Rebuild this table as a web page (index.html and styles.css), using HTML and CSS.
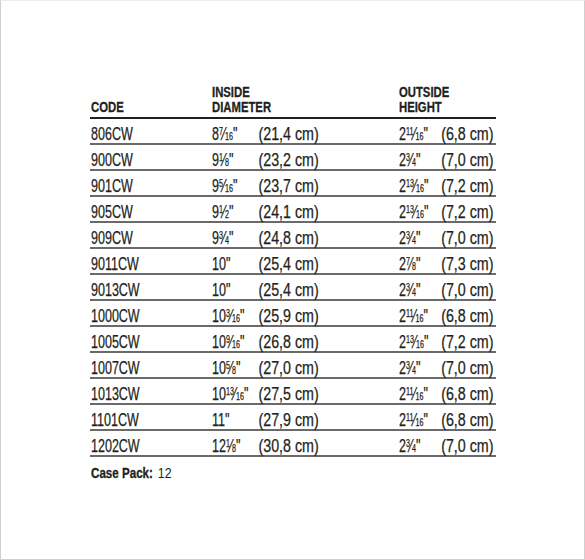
FILE: index.html
```html
<!DOCTYPE html>
<html>
<head>
<meta charset="utf-8">
<link rel="stylesheet" href="styles.css">
</head>
<body>
<div class="page">
  <div class="table">
    <div class="head">
      <div><span class="t">CODE</span></div>
      <div><span class="t">INSIDE<br>DIAMETER</span></div>
      <div><span class="t">OUTSIDE<br>HEIGHT</span></div>
    </div>
    <div class="row"><div><span class="t">806CW</span></div><div><span class="t"><span class="in">8<span class="fr"><span class="n">7</span>⁄<span class="d">16</span></span>"</span><span class="cm">(21,4 cm)</span></span></div><div><span class="t"><span class="out">2<span class="fr"><span class="n">11</span>⁄<span class="d">16</span></span>"</span><span class="cm">(6,8 cm)</span></span></div></div>
    <div class="row"><div><span class="t">900CW</span></div><div><span class="t"><span class="in">9<span class="fr"><span class="n">1</span>⁄<span class="d">8</span></span>"</span><span class="cm">(23,2 cm)</span></span></div><div><span class="t"><span class="out">2<span class="fr"><span class="n">3</span>⁄<span class="d">4</span></span>"</span><span class="cm">(7,0 cm)</span></span></div></div>
    <div class="row"><div><span class="t">901CW</span></div><div><span class="t"><span class="in">9<span class="fr"><span class="n">5</span>⁄<span class="d">16</span></span>"</span><span class="cm">(23,7 cm)</span></span></div><div><span class="t"><span class="out">2<span class="fr"><span class="n">13</span>⁄<span class="d">16</span></span>"</span><span class="cm">(7,2 cm)</span></span></div></div>
    <div class="row"><div><span class="t">905CW</span></div><div><span class="t"><span class="in">9<span class="fr"><span class="n">1</span>⁄<span class="d">2</span></span>"</span><span class="cm">(24,1 cm)</span></span></div><div><span class="t"><span class="out">2<span class="fr"><span class="n">13</span>⁄<span class="d">16</span></span>"</span><span class="cm">(7,2 cm)</span></span></div></div>
    <div class="row"><div><span class="t">909CW</span></div><div><span class="t"><span class="in">9<span class="fr"><span class="n">3</span>⁄<span class="d">4</span></span>"</span><span class="cm">(24,8 cm)</span></span></div><div><span class="t"><span class="out">2<span class="fr"><span class="n">3</span>⁄<span class="d">4</span></span>"</span><span class="cm">(7,0 cm)</span></span></div></div>
    <div class="row"><div><span class="t">9011CW</span></div><div><span class="t"><span class="in">10"</span><span class="cm">(25,4 cm)</span></span></div><div><span class="t"><span class="out">2<span class="fr"><span class="n">7</span>⁄<span class="d">8</span></span>"</span><span class="cm">(7,3 cm)</span></span></div></div>
    <div class="row"><div><span class="t">9013CW</span></div><div><span class="t"><span class="in">10"</span><span class="cm">(25,4 cm)</span></span></div><div><span class="t"><span class="out">2<span class="fr"><span class="n">3</span>⁄<span class="d">4</span></span>"</span><span class="cm">(7,0 cm)</span></span></div></div>
    <div class="row"><div><span class="t">1000CW</span></div><div><span class="t"><span class="in">10<span class="fr"><span class="n">3</span>⁄<span class="d">16</span></span>"</span><span class="cm">(25,9 cm)</span></span></div><div><span class="t"><span class="out">2<span class="fr"><span class="n">11</span>⁄<span class="d">16</span></span>"</span><span class="cm">(6,8 cm)</span></span></div></div>
    <div class="row"><div><span class="t">1005CW</span></div><div><span class="t"><span class="in">10<span class="fr"><span class="n">9</span>⁄<span class="d">16</span></span>"</span><span class="cm">(26,8 cm)</span></span></div><div><span class="t"><span class="out">2<span class="fr"><span class="n">13</span>⁄<span class="d">16</span></span>"</span><span class="cm">(7,2 cm)</span></span></div></div>
    <div class="row"><div><span class="t">1007CW</span></div><div><span class="t"><span class="in">10<span class="fr"><span class="n">5</span>⁄<span class="d">8</span></span>"</span><span class="cm">(27,0 cm)</span></span></div><div><span class="t"><span class="out">2<span class="fr"><span class="n">3</span>⁄<span class="d">4</span></span>"</span><span class="cm">(7,0 cm)</span></span></div></div>
    <div class="row"><div><span class="t">1013CW</span></div><div><span class="t"><span class="in">10<span class="fr"><span class="n">13</span>⁄<span class="d">16</span></span>"</span><span class="cm">(27,5 cm)</span></span></div><div><span class="t"><span class="out">2<span class="fr"><span class="n">11</span>⁄<span class="d">16</span></span>"</span><span class="cm">(6,8 cm)</span></span></div></div>
    <div class="row"><div><span class="t">1101CW</span></div><div><span class="t"><span class="in">11"</span><span class="cm">(27,9 cm)</span></span></div><div><span class="t"><span class="out">2<span class="fr"><span class="n">11</span>⁄<span class="d">16</span></span>"</span><span class="cm">(6,8 cm)</span></span></div></div>
    <div class="row"><div><span class="t">1202CW</span></div><div><span class="t"><span class="in">12<span class="fr"><span class="n">1</span>⁄<span class="d">8</span></span>"</span><span class="cm">(30,8 cm)</span></span></div><div><span class="t"><span class="out">2<span class="fr"><span class="n">3</span>⁄<span class="d">4</span></span>"</span><span class="cm">(7,0 cm)</span></span></div></div>
    <div class="note"><span class="t"><b>Case Pack:</b> <span class="qty">12</span></span></div>
  </div>
</div>
</body>
</html>
```
FILE: styles.css
```css
html, body {
  margin: 0;
  padding: 0;
  background: #fff;
}
.page {
  width: 585px;
  height: 560px;
  box-sizing: border-box;
  border: 1px solid #cfcfcf;
  border-top-color: #ececec;
  padding: 84px 0 0 89px;
  color: #231f20;
  font-family: "Liberation Sans", Arial, sans-serif;
}
.table {
  width: 406px;
}
.head, .row {
  display: grid;
  grid-template-columns: 121px 187px 1fr;
  align-items: end;
}
.t {
  display: inline-block;
  transform-origin: 0 100%;
  white-space: nowrap;
}
.head {
  font-weight: bold;
  font-size: 14.5px;
  line-height: 15px;
  padding-bottom: 2px;
  border-bottom: 2px solid #231f20;
}
.head .t {
  transform: scaleX(0.78);
  -webkit-text-stroke: 0.3px #231f20;
}
.head > div {
  padding-left: 1px;
}
.row {
  height: 26px;
  box-sizing: border-box;
  border-bottom: 2px solid #6a6a6a;
  font-size: 17.5px;
  line-height: 18px;
  padding-bottom: 0;
  white-space: nowrap;
}
.row .t {
  transform: scaleX(0.715);
  -webkit-text-stroke: 0.25px #231f20;
}
.row > div {
  padding-left: 1px;
}
.in {
  display: inline-block;
  width: 65px;
}
.out {
  display: inline-block;
  width: 59px;
}
.cm {
  display: inline-block;
  transform: scaleX(1.14);
  transform-origin: 0 100%;
}
.n, .d {
  font-size: 10px;
  line-height: 0;
}
.n {
  vertical-align: 5px;
}
.d {
  vertical-align: 0;
}
.note {
  margin-top: 8px;
  font-size: 14.5px;
  line-height: 15px;
  padding-left: 1px;
}
.note .t {
  transform: scaleX(0.8);
}
.note b {
  font-weight: bold;
  -webkit-text-stroke: 0.3px #231f20;
}
.qty {
  font-size: 15.5px;
  margin-left: 2px;
}
```
